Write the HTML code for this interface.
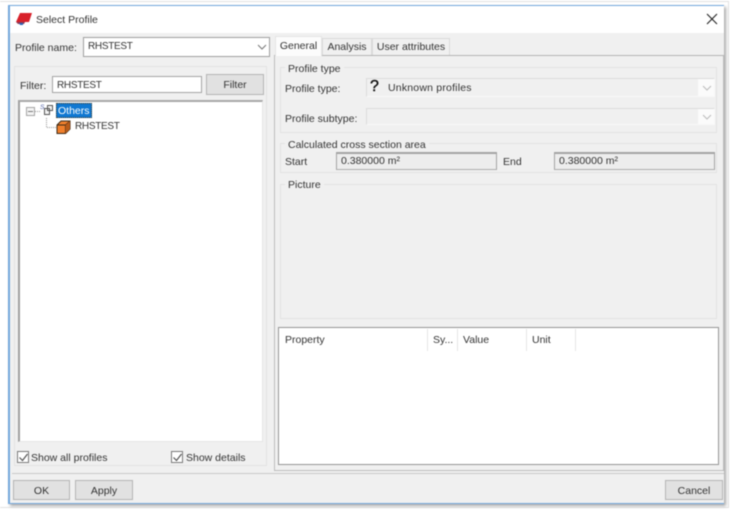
<!DOCTYPE html>
<html><head><meta charset="utf-8"><style>
html,body{margin:0;padding:0;background:#fff;width:730px;height:511px;overflow:hidden}
#r{position:relative;width:730px;height:511px;overflow:hidden;font:10.5px "Liberation Sans",sans-serif;color:#333;filter:blur(.45px)}
#r div,#r span.t{position:absolute;box-sizing:border-box;white-space:nowrap}
.t{line-height:14px}
.g{border:1px solid #e2e2e2}
.lg{background:#f0f0f0;padding:0 3px;line-height:12px;height:12px}
.btn{background:#e1e1e1;border:1px solid #b4b4b4;text-align:center;line-height:20px}
.ro{background:#ededed;border:1px solid #a4a4a4;border-top-width:2px;border-bottom-color:#adadad;padding-left:4px;line-height:14px}
.cb{width:12px;height:12px;background:#fff;border:1px solid #7a7a7a}
.rh{font-size:10px;letter-spacing:-.3px}
</style></head><body><div id="r">
<div style="left:0;top:1px;width:729px;height:507px;background:#fff;border:1px solid #e2e2e2;border-left:0"></div>
<div style="left:8px;top:5px;width:716px;height:499px;background:#f0f0f0;border:1px solid #74a8dc;border-right:0;border-left-width:2px;box-shadow:2px 2px 3px #a8a8a8"></div>
<div style="left:10px;top:6px;width:714px;height:27px;background:#fff"></div>
<svg style="position:absolute;left:15px;top:11px" width="20" height="14"><path d="M5 2H17L14 11H1Z" fill="#d8202a"/><path d="M1 11H10L9 13H3Z" fill="#8e3a55"/><path d="M4 12H8V14H5Z" fill="#2b62b8"/></svg>
<span class="t" style="left:36px;top:13px">Select Profile</span>
<svg style="position:absolute;left:706px;top:13px" width="12" height="12"><path d="M1 1L11 11M11 1L1 11" stroke="#222" stroke-width="1.1" fill="none"/></svg>

<span class="t" style="left:15px;top:41px">Profile name:</span>
<div style="left:83px;top:37px;width:187px;height:20px;background:#fff;border:1px solid #a0a0a0"></div>
<span class="t rh" style="left:88px;top:40px">RHSTEST</span>
<svg style="position:absolute;left:257px;top:44px" width="10" height="7"><path d="M1 1L5 5L9 1" stroke="#777" fill="none"/></svg>

<div class="g" style="left:14px;top:66px;width:253px;height:400px"></div>
<span class="t" style="left:20px;top:79px">Filter:</span>
<div style="left:52px;top:76px;width:150px;height:17px;background:#fff;border:1px solid #a5a5a5"></div>
<span class="t rh" style="left:57px;top:79px">RHSTEST</span>
<div class="btn" style="left:206px;top:74px;width:58px;height:21px">Filter</div>
<div style="left:18px;top:100px;width:245px;height:342px;background:#fff;border:1px solid #e6e6e6;border-left:2px solid #a0a0a0;border-top:2px solid #a8a8a8"></div>
<div style="left:26px;top:107px;width:9px;height:9px;background:#f4f4f4;border:1px solid #a5a5a5"></div>
<div style="left:28px;top:111px;width:5px;height:1px;background:#777"></div>
<svg style="position:absolute;left:35px;top:103px" width="20" height="14"><path d="M0 8.500H5" stroke="#999" stroke-dasharray="1 1"/><text x="5" y="6" font-size="6.500" font-family="Liberation Sans" font-style="italic" fill="#5566aa">S</text><path d="M12.500 2.500H17.500V7.500H12.500Z M9.500 5.500H14.500V11.500H9.500Z" fill="#f4f4f4" stroke="#555"/></svg>
<div style="left:56px;top:103px;width:36px;height:15px;background:#0f78d2;outline:1px dotted #4a3a20;outline-offset:-1px"></div>
<span class="t" style="left:58px;top:104px;color:#fff">Others</span>
<svg style="position:absolute;left:46px;top:118px" width="26" height="18"><path d="M.5 0V9.500H11" stroke="#999" stroke-dasharray="1 1" fill="none"/><path d="M11 7L15 3H24V11L19.500 15.500H11Z" fill="#f07f2c" stroke="#3a2a18"/><path d="M11 7H19.500V15.500M19.500 7L24 3" fill="none" stroke="#3a2a18"/><path d="M19.500 7L24 3V11L19.500 15.500Z" fill="#b85a18"/></svg>
<span class="t rh" style="left:75px;top:120px">RHSTEST</span>

<div class="cb" style="left:17px;top:451px"></div>
<svg style="position:absolute;left:18px;top:452px" width="11" height="11"><path d="M1.500 5.500L4.500 8.500L9.500 2" stroke="#555" stroke-width="1.200" fill="none"/></svg>
<span class="t" style="left:31px;top:451px">Show all profiles</span>
<div style="left:120px;top:465px;width:51px;height:1px;background:#e2e2e2"></div>
<div class="cb" style="left:171px;top:451px"></div>
<svg style="position:absolute;left:172px;top:452px" width="11" height="11"><path d="M1.500 5.500L4.500 8.500L9.500 2" stroke="#555" stroke-width="1.200" fill="none"/></svg>
<span class="t" style="left:186px;top:451px">Show details</span>

<div style="left:274px;top:55px;width:450px;height:416px;border:1px solid #bcbcbc;border-top-color:#b4b4b4"></div>
<div style="left:275px;top:36px;width:47px;height:20px;background:#fcfcfc;border:1px solid #e4e4e4;border-bottom:0;text-align:center;line-height:18px">General</div>
<div style="left:322px;top:38px;width:50px;height:17px;border:1px solid #dadada;border-bottom:0;text-align:center;line-height:16px">Analysis</div>
<div style="left:372px;top:38px;width:78px;height:17px;border:1px solid #dadada;border-bottom:0;text-align:center;line-height:16px">User attributes</div>

<div class="g" style="left:280px;top:67px;width:437px;height:66px"></div>
<span class="lg" style="position:absolute;left:285px;top:63px">Profile type</span>
<span class="t" style="left:285px;top:82px">Profile type:</span>
<div style="left:366px;top:78px;width:349px;height:19px;background:#f0f0f0;border:1px solid #dcdcdc;border-bottom-color:#f8f8f8;border-right-color:#f8f8f8"></div>
<div style="left:698px;top:79px;width:16px;height:17px;background:#fbfbfb"></div>
<svg style="position:absolute;left:702px;top:85px" width="10" height="6"><path d="M1 1L5 5L9 1" stroke="#bbb" fill="none"/></svg>
<span class="t" style="left:370px;top:79px;font:16px/16px 'Liberation Sans',sans-serif;color:#111;-webkit-text-stroke:.4px #111">?</span>
<span class="t" style="left:388px;top:81px;letter-spacing:.2px">Unknown profiles</span>
<span class="t" style="left:285px;top:112px">Profile subtype:</span>
<div style="left:366px;top:108px;width:349px;height:17px;background:#f0f0f0;border:1px solid #dcdcdc;border-bottom-color:#f8f8f8;border-right-color:#f8f8f8"></div>
<div style="left:698px;top:109px;width:16px;height:15px;background:#fbfbfb"></div>
<svg style="position:absolute;left:702px;top:114px" width="10" height="6"><path d="M1 1L5 5L9 1" stroke="#bbb" fill="none"/></svg>

<div class="g" style="left:280px;top:143px;width:437px;height:30px"></div>
<span class="lg" style="position:absolute;left:285px;top:139px">Calculated cross section area</span>
<span class="t" style="left:285px;top:155px">Start</span>
<div class="ro" style="left:336px;top:152px;width:161px;height:18px">0.380000 m²</div>
<span class="t" style="left:503px;top:155px">End</span>
<div class="ro" style="left:554px;top:152px;width:161px;height:18px">0.380000 m²</div>

<div class="g" style="left:280px;top:184px;width:437px;height:135px"></div>
<span class="lg" style="position:absolute;left:285px;top:179px">Picture</span>

<div style="left:278px;top:327px;width:441px;height:138px;background:#fff;border:1px solid #969696"></div>
<span class="t" style="left:285px;top:333px">Property</span>
<span class="t" style="left:433px;top:333px">Sy...</span>
<span class="t" style="left:463px;top:333px">Value</span>
<span class="t" style="left:532px;top:333px">Unit</span>
<div style="left:427px;top:329px;width:1px;height:22px;background:#e6e6e6"></div>
<div style="left:457px;top:329px;width:1px;height:22px;background:#e6e6e6"></div>
<div style="left:526px;top:329px;width:1px;height:22px;background:#e6e6e6"></div>
<div style="left:575px;top:329px;width:1px;height:22px;background:#e6e6e6"></div>

<div style="left:12px;top:473px;width:712px;height:1px;background:#c8c8c8"></div>
<div class="btn" style="left:13px;top:480px;width:57px;height:20px">OK</div>
<div class="btn" style="left:75px;top:480px;width:58px;height:20px">Apply</div>
<div class="btn" style="left:665px;top:480px;width:58px;height:20px">Cancel</div>
</div></body></html>
